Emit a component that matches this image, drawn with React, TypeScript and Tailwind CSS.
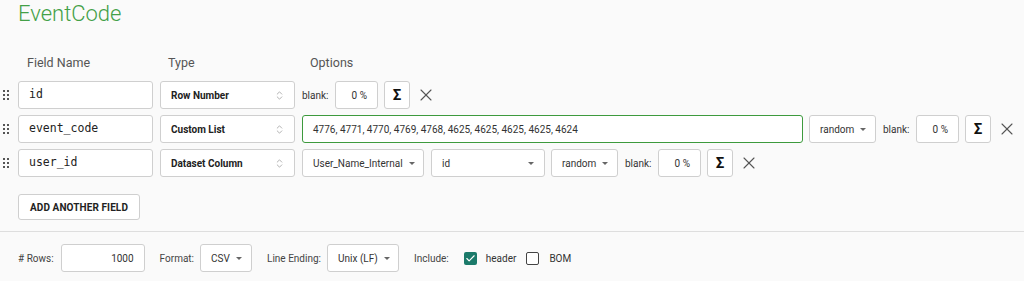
import { ChevronsUpDown, X, Check } from "lucide-react"

const box = "shrink-0 h-[28px] flex items-center bg-white border border-[#cfcfcf] rounded-[3px] whitespace-nowrap"

function Handle() {
  return (
    <div className="shrink-0 w-[18px] h-[28px] flex items-center pl-[3px]">
      <div className="grid grid-cols-2 gap-[2px]">
        {[0, 1, 2, 3, 4, 5].map(i => <span key={i} className="w-[2px] h-[2px] bg-[#555]" />)}
      </div>
    </div>
  )
}

function NameInput({ value }: { value: string }) {
  return (
    <div className={`${box} w-[135px] px-[10px] font-['DejaVu_Sans_Mono',monospace] text-[11.5px] text-[#222]`}>{value}</div>
  )
}

function TypeSelect({ label }: { label: string }) {
  return (
    <div className={`${box} w-[135px] ml-[7px] pl-[10px] pr-[9px] justify-between text-[10px] font-bold text-[#222]`}>
      <span>{label}</span>
      <ChevronsUpDown size={11} strokeWidth={1.4} className="text-[#888]" />
    </div>
  )
}

function Caret() {
  return <span className="shrink-0 ml-[6px] w-0 h-0 border-l-[3px] border-r-[3px] border-t-[3px] border-l-transparent border-r-transparent border-t-[#666]" />
}

function Dropdown({ label, w, className = "" }: { label: string; w: string; className?: string }) {
  return (
    <div className={`${box} ${w} pl-[10px] pr-[10px] justify-between text-[10px] text-[#333] ${className}`}>
      <span>{label}</span>
      <Caret />
    </div>
  )
}

function BlankTail() {
  return (
    <>
      <span className="shrink-0 w-[27px] text-[10px] text-[#333] ml-[7px]">blank:</span>
      <div className={`${box} w-[43px] ml-[6px] justify-end pr-[10px] text-[10px] text-[#333]`}>0 %</div>
      <button className={`${box} w-[26px] ml-[6px] justify-center text-[15px] font-bold text-[#111]`}>Σ</button>
      <X size={20} strokeWidth={1.3} className="shrink-0 ml-[6px] text-[#555]" />
    </>
  )
}

export default function App() {
  return (
    <div className="h-[281px] bg-[#fafafa] font-['Roboto',sans-serif] text-[#333] overflow-hidden">
      <h1 className="pl-[18px] pt-[1px] text-[22px] leading-[26px] font-light text-[#43a047]">EventCode</h1>

      <div className="mt-[28px] flex text-[12.5px] leading-[16px] text-[#555]">
        <span className="ml-[27px] w-[141px]">Field Name</span>
        <span className="w-[142px]">Type</span>
        <span>Options</span>
      </div>

      <div className="mt-[10px] flex flex-col gap-[6px]">
        <div className="flex items-center">
          <Handle />
          <NameInput value="id" />
          <TypeSelect label="Row Number" />
          <BlankTail />
        </div>
        <div className="flex items-center">
          <Handle />
          <NameInput value="event_code" />
          <TypeSelect label="Custom List" />
          <div className={`${box} ml-[7px] w-[501px] px-[10px] !border-[#3d9a3d] text-[10px] text-[#333]`}>
            4776, 4771, 4770, 4769, 4768, 4625, 4625, 4625, 4625, 4624
          </div>
          <Dropdown label="random" w="w-[67px]" className="ml-[6px]" />
          <BlankTail />
        </div>
        <div className="flex items-center">
          <Handle />
          <NameInput value="user_id" />
          <TypeSelect label="Dataset Column" />
          <Dropdown label="User_Name_Internal" w="w-[122px]" className="ml-[7px]" />
          <Dropdown label="id" w="w-[114px]" className="ml-[7px]" />
          <Dropdown label="random" w="w-[67px]" className="ml-[6px]" />
          <BlankTail />
        </div>
      </div>

      <button className="mt-[17px] ml-[18px] h-[26px] w-[122px] bg-white border border-[#cfcfcf] rounded-[3px] text-[10px] font-bold text-[#222] tracking-[0.1px]">
        ADD ANOTHER FIELD
      </button>

      <div className="mt-[11px] border-t border-[#dedede]" />

      <div className="mt-[12px] flex items-center pl-[18px] text-[10px] text-[#444] whitespace-nowrap">
        <span>#&nbsp;Rows:</span>
        <div className={`${box} w-[84px] ml-[7px] justify-end pr-[10px] text-[10px] text-[#333]`}>1000</div>
        <span className="ml-[15px]">Format:</span>
        <Dropdown label="CSV" w="w-[52px]" className="ml-[6px]" />
        <span className="ml-[15px]">Line Ending:</span>
        <Dropdown label="Unix (LF)" w="w-[72px]" className="ml-[6px]" />
        <span className="ml-[15px]">Include:</span>
        <span className="ml-[15px] shrink-0 w-[13px] h-[13px] rounded-[2px] bg-[#1b7a6a] flex items-center justify-center">
          <Check size={11} strokeWidth={2.5} className="text-white" />
        </span>
        <span className="ml-[9px] text-[#333]">header</span>
        <span className="ml-[10px] shrink-0 w-[13px] h-[13px] rounded-[2px] border-[1.5px] border-[#444] bg-white" />
        <span className="ml-[10px] text-[#333]">BOM</span>
      </div>
    </div>
  )
}
